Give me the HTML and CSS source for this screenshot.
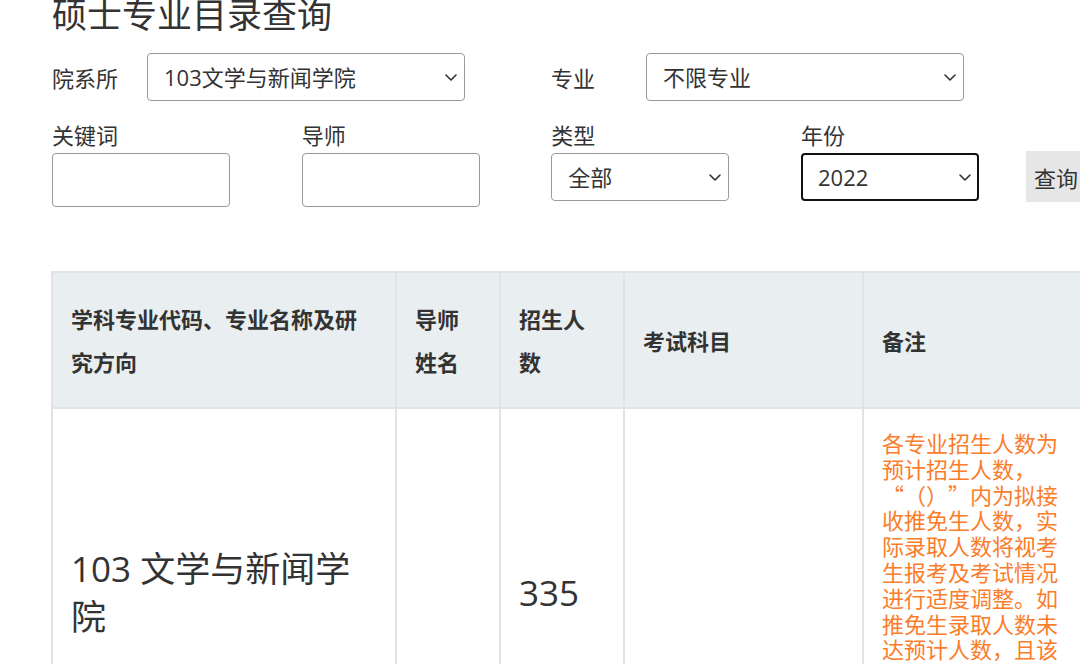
FILE: index.html
```html
<!DOCTYPE html>
<html lang="zh-CN">
<head>
<meta charset="utf-8">
<title>硕士专业目录查询</title>
<link rel="stylesheet" href="styles.css">
</head>
<body>
<div class="page">
  <h1 class="title">硕士专业目录查询</h1>

  <div class="row-top">
    <div class="inline-group">
      <label class="inline-label">院系所</label>
      <span class="select-wrap wide">
        <select class="select"><option>103文学与新闻学院</option></select>
        <svg class="chev" viewBox="0 0 12 7" width="12" height="7"><path d="M1 1 L6 6 L11 1" fill="none" stroke="#333" stroke-width="1.6" stroke-linecap="round" stroke-linejoin="round"/></svg>
      </span>
    </div>
    <div class="inline-group">
      <label class="inline-label">专业</label>
      <span class="select-wrap wide">
        <select class="select"><option>不限专业</option></select>
        <svg class="chev" viewBox="0 0 12 7" width="12" height="7"><path d="M1 1 L6 6 L11 1" fill="none" stroke="#333" stroke-width="1.6" stroke-linecap="round" stroke-linejoin="round"/></svg>
      </span>
    </div>
  </div>

  <div class="row-fields">
    <div class="field">
      <label class="stack-label">关键词</label>
      <input class="text-input" type="text">
    </div>
    <div class="field">
      <label class="stack-label">导师</label>
      <input class="text-input" type="text">
    </div>
    <div class="field">
      <label class="stack-label">类型</label>
      <span class="select-wrap narrow">
        <select class="select"><option>全部</option></select>
        <svg class="chev" viewBox="0 0 12 7" width="12" height="7"><path d="M1 1 L6 6 L11 1" fill="none" stroke="#333" stroke-width="1.6" stroke-linecap="round" stroke-linejoin="round"/></svg>
      </span>
    </div>
    <div class="field">
      <label class="stack-label">年份</label>
      <span class="select-wrap narrow">
        <select class="select focused"><option>2022</option></select>
        <svg class="chev" viewBox="0 0 12 7" width="12" height="7"><path d="M1 1 L6 6 L11 1" fill="none" stroke="#333" stroke-width="1.6" stroke-linecap="round" stroke-linejoin="round"/></svg>
      </span>
    </div>
    <div class="field btn-field">
      <button class="btn" type="button">查询</button>
    </div>
  </div>

  <table class="catalog">
    <colgroup>
      <col class="c1"><col class="c2"><col class="c3"><col class="c4"><col class="c5">
    </colgroup>
    <thead>
      <tr>
        <th>学科专业代码、专业名称及研究方向</th>
        <th>导师姓名</th>
        <th>招生人数</th>
        <th>考试科目</th>
        <th>备注</th>
      </tr>
    </thead>
    <tbody>
      <tr class="dept-row">
        <td class="dept">103 文学与新闻学院</td>
        <td></td>
        <td class="count">335</td>
        <td></td>
        <td class="note">各专业招生人数为预计招生人数，“（）”内为拟接收推免生人数，实际录取人数将视考生报考及考试情况进行适度调整。如推免生录取人数未达预计人数，且该专业有统考生源，差额部分将转为统考名额。</td>
      </tr>
    </tbody>
  </table>
</div>
</body>
</html>
```
FILE: styles.css
```css
html, body {
  margin: 0;
  padding: 0;
  background: #fff;
  overflow: hidden;
}

body {
  font-family: "Open Sans", "Noto Sans CJK SC", sans-serif;
  color: #333;
  font-size: 22px;
  text-spacing-trim: space-all;
}

.page {
  padding-left: 52px;
  width: 1100px;
}

.title {
  margin: -5px 0 0 0;
  font-size: 35px;
  line-height: 35px;
  font-weight: 400;
  color: #333;
  font-family: "Noto Sans CJK SC", sans-serif;
}

.row-top {
  display: grid;
  grid-template-columns: 499px 499px;
  margin-top: 23px;
}

.inline-group {
  display: flex;
  align-items: center;
}

.inline-label {
  width: 95px;
  font-size: 22px;
  line-height: 30px;
  font-family: "Noto Sans CJK SC", sans-serif;
}

.select-wrap {
  position: relative;
  display: inline-block;
}

.select-wrap.wide { width: 318px; }
.select-wrap.narrow { width: 178px; }

.select {
  appearance: none;
  -webkit-appearance: none;
  width: 100%;
  height: 48px;
  box-sizing: border-box;
  border: 1px solid #9a9a9a;
  border-radius: 4px;
  background: #fff;
  padding: 0 30px 0 16px;
  font-family: "Open Sans", "Noto Sans CJK SC", sans-serif;
  font-size: 22px;
  color: #333;
  display: block;
}

.select.focused {
  border: 2px solid #111;
  padding-left: 15px;
}

.chev {
  position: absolute;
  right: 8px;
  top: 21px;
  pointer-events: none;
}

.row-fields {
  display: grid;
  grid-template-columns: 249.67px 249.67px 249.67px 225px auto;
  margin-top: 18px;
}

.field {
  display: flex;
  flex-direction: column;
  align-items: flex-start;
}

.stack-label {
  font-size: 22px;
  line-height: 30px;
  margin-bottom: 4px;
  font-family: "Noto Sans CJK SC", sans-serif;
}

.text-input {
  width: 178px;
  height: 54px;
  box-sizing: border-box;
  border: 1px solid #9a9a9a;
  border-radius: 4px;
  margin: 0;
  padding: 0 8px;
  font-size: 22px;
}

.btn-field {
  padding-top: 32px;
}

.btn {
  height: 51px;
  border: none;
  background: #e6e6e6;
  padding: 0 8px;
  margin: 0;
  font-family: "Noto Sans CJK SC", sans-serif;
  font-size: 22px;
  color: #333;
  border-radius: 0;
}

.catalog {
  margin-top: 64px;
  margin-left: -1px;
  border-collapse: collapse;
  table-layout: fixed;
  width: 1032px;
  border-top: 2px solid #e1e4e7;
  border-left: 2px solid #e1e4e7;
  font-family: "Open Sans", "Noto Sans CJK SC", sans-serif;
}

.c1 { width: 344px; }
.c2 { width: 104px; }
.c3 { width: 124px; }
.c4 { width: 239px; }
.c5 { width: 221px; }

.catalog th,
.catalog td {
  border: 2px solid #e1e4e7;
  padding: 0 20px 0 18px;
  vertical-align: middle;
  text-align: left;
}

.catalog th {
  background: #e9eef1;
  font-family: "Noto Sans CJK SC", sans-serif;
  font-weight: 700;
  font-size: 22px;
  line-height: 43px;
  color: #333;
  height: 86px;
  padding-top: 24px;
  padding-bottom: 24px;
}

.dept-row {
  height: 370px;
}

.dept {
  font-size: 35px;
  line-height: 48px;
  color: #333;
}

.count {
  font-size: 35px;
  line-height: 48px;
  color: #333;
}

.note {
  vertical-align: top !important;
  padding-top: 21px !important;
  font-family: "Noto Sans CJK SC", sans-serif;
  font-size: 22px;
  line-height: 25.8px;
  color: #fb7d2a;
}
```
